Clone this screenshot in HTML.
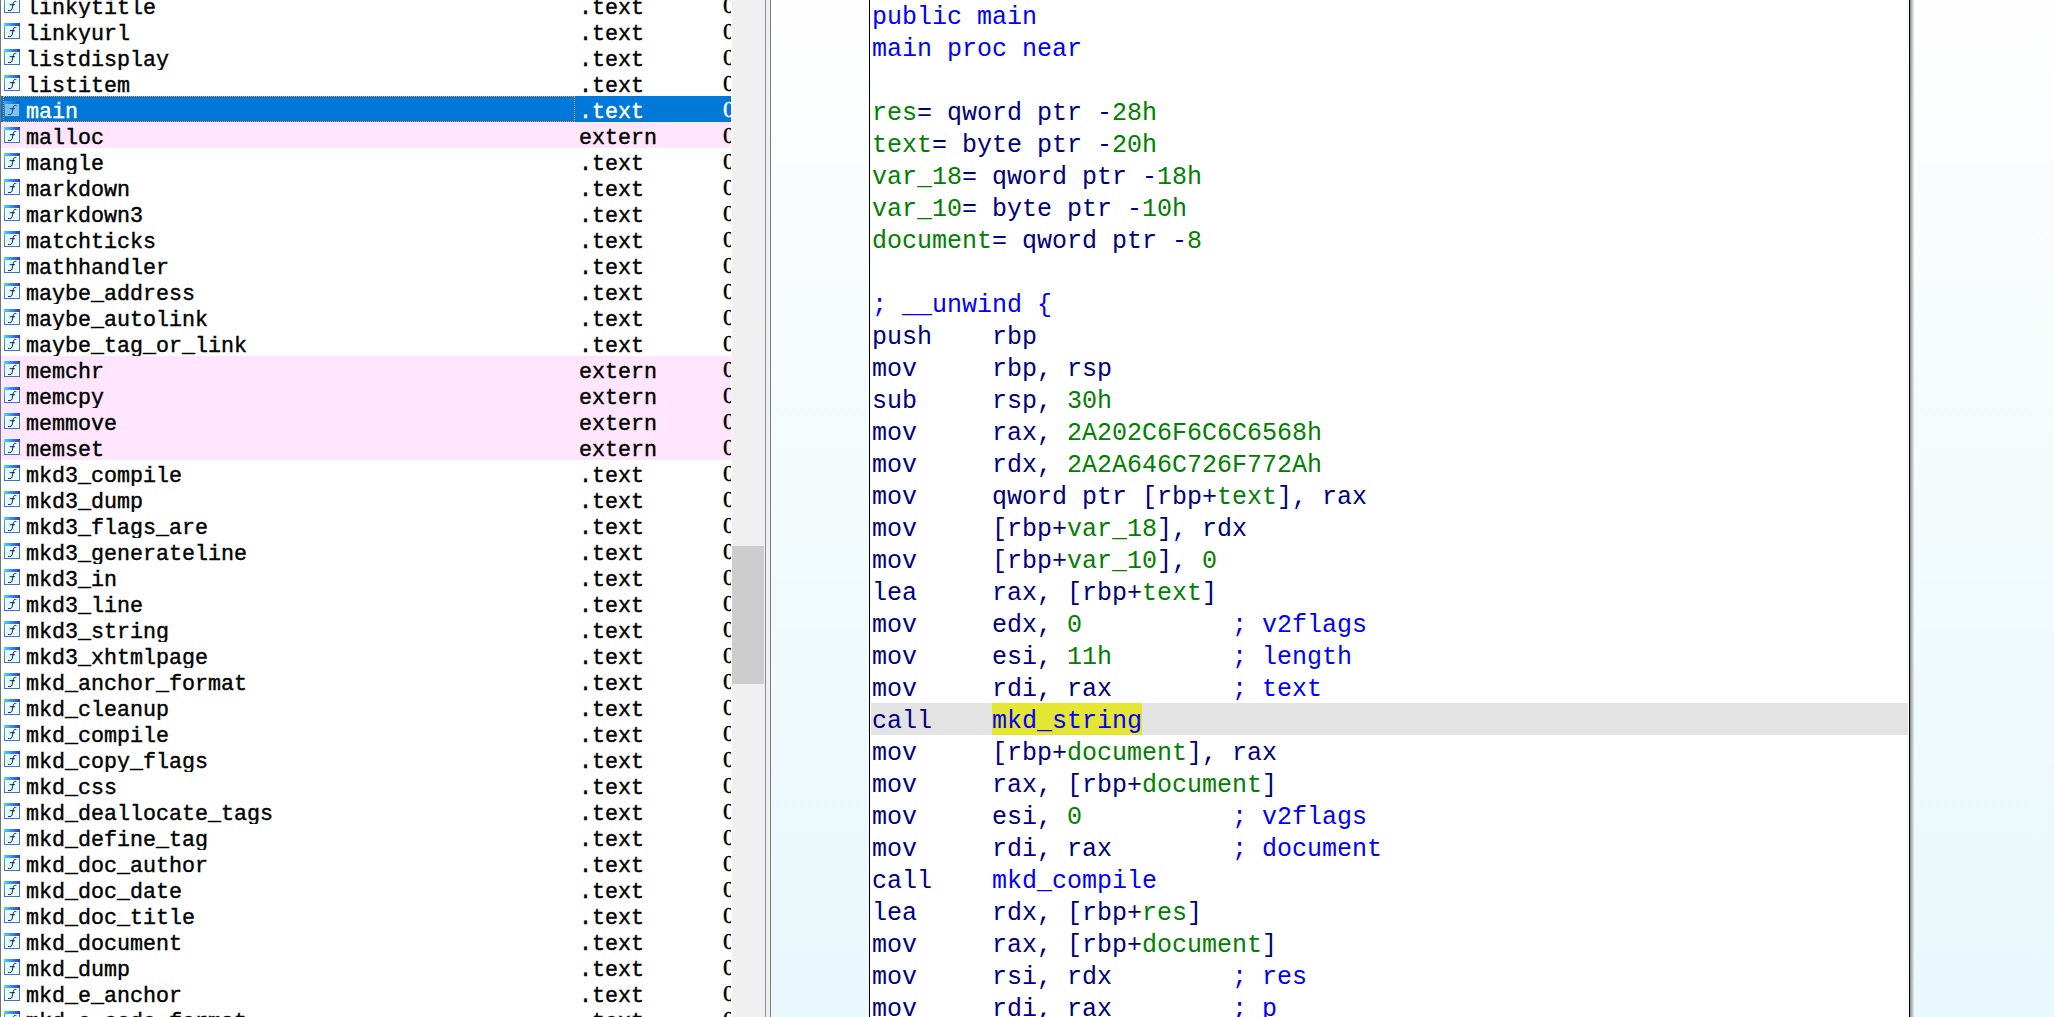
<!DOCTYPE html>
<html><head><meta charset="utf-8"><style>
*{margin:0;padding:0;box-sizing:border-box}
html,body{width:2054px;height:1017px;overflow:hidden;background:#fff}
body{position:relative;font-family:"Liberation Mono",monospace}
#left{position:absolute;left:0;top:0;width:732px;height:1017px;overflow:hidden;background:#fff}
#lb{position:absolute;left:0;top:0;width:1px;height:1017px;background:#6e7480;z-index:3}
.r{position:absolute;left:1px;width:730px;overflow:hidden;height:26px;color:#000;-webkit-text-stroke:0.4px currentColor;font-size:21.667px;line-height:26px;white-space:pre}
.r.ext{background:#ffe6fc}
.r.sel{background:#0078d7;color:#fff}
.r.sel .foc{position:absolute;left:2px;top:0;width:572px;height:26px;border:1px dotted #ff8c1a}
.ic{position:absolute;left:3px;top:5px}
.sel .tint{position:absolute;left:3px;top:5px;width:16px;height:16px;background:rgba(0,120,215,0.45)}
.c1{position:absolute;left:25px;top:4px}
.c2{position:absolute;left:578px;top:4px}
.c3{position:absolute;left:722px;top:0px;font-family:"Liberation Serif",serif;font-size:24px}
#sb{position:absolute;left:732px;top:0;width:33px;height:1017px;background:#f0f0f0}
#thumb{position:absolute;left:732px;top:546px;width:32px;height:138px;background:#cdcdcd}
#sp1{position:absolute;left:765px;top:0;width:1px;height:1017px;background:#878c96}
#sp{position:absolute;left:766px;top:0;width:4px;height:1017px;background:#f0f0f0}
#sp2{position:absolute;left:770px;top:0;width:1px;height:1017px;background:#7a7a7a}
#right{position:absolute;left:771px;top:0;width:1283px;height:1017px;overflow:hidden;background:linear-gradient(#fefefe 0px,#e8f8fc 1017px)}
#node{position:absolute;left:98px;top:-10px;width:1041px;height:1040px;background:#fff;border-left:1px solid #000;border-right:1px solid #000}
#shadow{position:absolute;left:1139px;top:-10px;width:4px;height:1040px;background:linear-gradient(90deg,#8a9096,rgba(200,210,215,0.3))}
.l{position:absolute;left:0;width:1039px;height:32px}
.l.cur{background:#e3e3e3;left:1px;width:1037px}
.l .t{position:absolute;left:2px;top:0;font-size:25px;line-height:32px;padding-top:3px;white-space:pre}
.l.cur .t{left:1px}
.n{color:#000080}.b{color:#0000ff}.g{color:#008000}
.hl{}
.yb{position:absolute;left:121px;top:0;width:150px;height:32px;background:#e5e534}
</style></head><body>
<svg width="0" height="0" style="position:absolute"><defs><linearGradient id="gb" x1="0" y1="0" x2="1" y2="0"><stop offset="0" stop-color="#48dcfc"/><stop offset="1" stop-color="#2838d0"/></linearGradient><linearGradient id="gl" x1="0" y1="0" x2="0" y2="1"><stop offset="0" stop-color="#38c4f4"/><stop offset="1" stop-color="#3a6cd8"/></linearGradient></defs></svg>
<div id="left"><div class="r" style="top:-8px"><svg class="ic" width="16" height="16" viewBox="0 0 16 16"><rect x="0.5" y="0.5" width="15" height="15" fill="#fff" stroke="#3b70dc"/><rect x="0" y="0" width="1" height="16" fill="url(#gl)"/><rect x="0" y="0" width="16" height="3" fill="url(#gb)"/><rect x="1" y="3" width="14" height="1" fill="#fff"/><rect x="2" y="4" width="12" height="10" fill="#e4fbfc"/><path d="M12.3 4.6 C11.0 4.0 9.8 4.5 9.3 6.4 L8.1 11.8 C7.7 13.4 6.7 13.8 4.0 13.5 M5.8 7.7 H10.9" fill="none" stroke="#0c1e4a" stroke-width="1.0"/></svg><span class="c1">linkytitle</span><span class="c2">.text</span><span class="c3">0</span></div><div class="r" style="top:18px"><svg class="ic" width="16" height="16" viewBox="0 0 16 16"><rect x="0.5" y="0.5" width="15" height="15" fill="#fff" stroke="#3b70dc"/><rect x="0" y="0" width="1" height="16" fill="url(#gl)"/><rect x="0" y="0" width="16" height="3" fill="url(#gb)"/><rect x="1" y="3" width="14" height="1" fill="#fff"/><rect x="2" y="4" width="12" height="10" fill="#e4fbfc"/><path d="M12.3 4.6 C11.0 4.0 9.8 4.5 9.3 6.4 L8.1 11.8 C7.7 13.4 6.7 13.8 4.0 13.5 M5.8 7.7 H10.9" fill="none" stroke="#0c1e4a" stroke-width="1.0"/></svg><span class="c1">linkyurl</span><span class="c2">.text</span><span class="c3">0</span></div><div class="r" style="top:44px"><svg class="ic" width="16" height="16" viewBox="0 0 16 16"><rect x="0.5" y="0.5" width="15" height="15" fill="#fff" stroke="#3b70dc"/><rect x="0" y="0" width="1" height="16" fill="url(#gl)"/><rect x="0" y="0" width="16" height="3" fill="url(#gb)"/><rect x="1" y="3" width="14" height="1" fill="#fff"/><rect x="2" y="4" width="12" height="10" fill="#e4fbfc"/><path d="M12.3 4.6 C11.0 4.0 9.8 4.5 9.3 6.4 L8.1 11.8 C7.7 13.4 6.7 13.8 4.0 13.5 M5.8 7.7 H10.9" fill="none" stroke="#0c1e4a" stroke-width="1.0"/></svg><span class="c1">listdisplay</span><span class="c2">.text</span><span class="c3">0</span></div><div class="r" style="top:70px"><svg class="ic" width="16" height="16" viewBox="0 0 16 16"><rect x="0.5" y="0.5" width="15" height="15" fill="#fff" stroke="#3b70dc"/><rect x="0" y="0" width="1" height="16" fill="url(#gl)"/><rect x="0" y="0" width="16" height="3" fill="url(#gb)"/><rect x="1" y="3" width="14" height="1" fill="#fff"/><rect x="2" y="4" width="12" height="10" fill="#e4fbfc"/><path d="M12.3 4.6 C11.0 4.0 9.8 4.5 9.3 6.4 L8.1 11.8 C7.7 13.4 6.7 13.8 4.0 13.5 M5.8 7.7 H10.9" fill="none" stroke="#0c1e4a" stroke-width="1.0"/></svg><span class="c1">listitem</span><span class="c2">.text</span><span class="c3">0</span></div><div class="r sel" style="top:96px"><div class="foc"></div><svg class="ic" width="16" height="16" viewBox="0 0 16 16"><rect x="0.5" y="0.5" width="15" height="15" fill="#fff" stroke="#3b70dc"/><rect x="0" y="0" width="1" height="16" fill="url(#gl)"/><rect x="0" y="0" width="16" height="3" fill="url(#gb)"/><rect x="1" y="3" width="14" height="1" fill="#fff"/><rect x="2" y="4" width="12" height="10" fill="#e4fbfc"/><path d="M12.3 4.6 C11.0 4.0 9.8 4.5 9.3 6.4 L8.1 11.8 C7.7 13.4 6.7 13.8 4.0 13.5 M5.8 7.7 H10.9" fill="none" stroke="#0c1e4a" stroke-width="1.0"/></svg><div class="tint"></div><span class="c1">main</span><span class="c2">.text</span><span class="c3">0</span></div><div class="r ext" style="top:122px"><svg class="ic" width="16" height="16" viewBox="0 0 16 16"><rect x="0.5" y="0.5" width="15" height="15" fill="#fff" stroke="#3b70dc"/><rect x="0" y="0" width="1" height="16" fill="url(#gl)"/><rect x="0" y="0" width="16" height="3" fill="url(#gb)"/><rect x="1" y="3" width="14" height="1" fill="#fff"/><rect x="2" y="4" width="12" height="10" fill="#e4fbfc"/><path d="M12.3 4.6 C11.0 4.0 9.8 4.5 9.3 6.4 L8.1 11.8 C7.7 13.4 6.7 13.8 4.0 13.5 M5.8 7.7 H10.9" fill="none" stroke="#0c1e4a" stroke-width="1.0"/></svg><span class="c1">malloc</span><span class="c2">extern</span><span class="c3">0</span></div><div class="r" style="top:148px"><svg class="ic" width="16" height="16" viewBox="0 0 16 16"><rect x="0.5" y="0.5" width="15" height="15" fill="#fff" stroke="#3b70dc"/><rect x="0" y="0" width="1" height="16" fill="url(#gl)"/><rect x="0" y="0" width="16" height="3" fill="url(#gb)"/><rect x="1" y="3" width="14" height="1" fill="#fff"/><rect x="2" y="4" width="12" height="10" fill="#e4fbfc"/><path d="M12.3 4.6 C11.0 4.0 9.8 4.5 9.3 6.4 L8.1 11.8 C7.7 13.4 6.7 13.8 4.0 13.5 M5.8 7.7 H10.9" fill="none" stroke="#0c1e4a" stroke-width="1.0"/></svg><span class="c1">mangle</span><span class="c2">.text</span><span class="c3">0</span></div><div class="r" style="top:174px"><svg class="ic" width="16" height="16" viewBox="0 0 16 16"><rect x="0.5" y="0.5" width="15" height="15" fill="#fff" stroke="#3b70dc"/><rect x="0" y="0" width="1" height="16" fill="url(#gl)"/><rect x="0" y="0" width="16" height="3" fill="url(#gb)"/><rect x="1" y="3" width="14" height="1" fill="#fff"/><rect x="2" y="4" width="12" height="10" fill="#e4fbfc"/><path d="M12.3 4.6 C11.0 4.0 9.8 4.5 9.3 6.4 L8.1 11.8 C7.7 13.4 6.7 13.8 4.0 13.5 M5.8 7.7 H10.9" fill="none" stroke="#0c1e4a" stroke-width="1.0"/></svg><span class="c1">markdown</span><span class="c2">.text</span><span class="c3">0</span></div><div class="r" style="top:200px"><svg class="ic" width="16" height="16" viewBox="0 0 16 16"><rect x="0.5" y="0.5" width="15" height="15" fill="#fff" stroke="#3b70dc"/><rect x="0" y="0" width="1" height="16" fill="url(#gl)"/><rect x="0" y="0" width="16" height="3" fill="url(#gb)"/><rect x="1" y="3" width="14" height="1" fill="#fff"/><rect x="2" y="4" width="12" height="10" fill="#e4fbfc"/><path d="M12.3 4.6 C11.0 4.0 9.8 4.5 9.3 6.4 L8.1 11.8 C7.7 13.4 6.7 13.8 4.0 13.5 M5.8 7.7 H10.9" fill="none" stroke="#0c1e4a" stroke-width="1.0"/></svg><span class="c1">markdown3</span><span class="c2">.text</span><span class="c3">0</span></div><div class="r" style="top:226px"><svg class="ic" width="16" height="16" viewBox="0 0 16 16"><rect x="0.5" y="0.5" width="15" height="15" fill="#fff" stroke="#3b70dc"/><rect x="0" y="0" width="1" height="16" fill="url(#gl)"/><rect x="0" y="0" width="16" height="3" fill="url(#gb)"/><rect x="1" y="3" width="14" height="1" fill="#fff"/><rect x="2" y="4" width="12" height="10" fill="#e4fbfc"/><path d="M12.3 4.6 C11.0 4.0 9.8 4.5 9.3 6.4 L8.1 11.8 C7.7 13.4 6.7 13.8 4.0 13.5 M5.8 7.7 H10.9" fill="none" stroke="#0c1e4a" stroke-width="1.0"/></svg><span class="c1">matchticks</span><span class="c2">.text</span><span class="c3">0</span></div><div class="r" style="top:252px"><svg class="ic" width="16" height="16" viewBox="0 0 16 16"><rect x="0.5" y="0.5" width="15" height="15" fill="#fff" stroke="#3b70dc"/><rect x="0" y="0" width="1" height="16" fill="url(#gl)"/><rect x="0" y="0" width="16" height="3" fill="url(#gb)"/><rect x="1" y="3" width="14" height="1" fill="#fff"/><rect x="2" y="4" width="12" height="10" fill="#e4fbfc"/><path d="M12.3 4.6 C11.0 4.0 9.8 4.5 9.3 6.4 L8.1 11.8 C7.7 13.4 6.7 13.8 4.0 13.5 M5.8 7.7 H10.9" fill="none" stroke="#0c1e4a" stroke-width="1.0"/></svg><span class="c1">mathhandler</span><span class="c2">.text</span><span class="c3">0</span></div><div class="r" style="top:278px"><svg class="ic" width="16" height="16" viewBox="0 0 16 16"><rect x="0.5" y="0.5" width="15" height="15" fill="#fff" stroke="#3b70dc"/><rect x="0" y="0" width="1" height="16" fill="url(#gl)"/><rect x="0" y="0" width="16" height="3" fill="url(#gb)"/><rect x="1" y="3" width="14" height="1" fill="#fff"/><rect x="2" y="4" width="12" height="10" fill="#e4fbfc"/><path d="M12.3 4.6 C11.0 4.0 9.8 4.5 9.3 6.4 L8.1 11.8 C7.7 13.4 6.7 13.8 4.0 13.5 M5.8 7.7 H10.9" fill="none" stroke="#0c1e4a" stroke-width="1.0"/></svg><span class="c1">maybe_address</span><span class="c2">.text</span><span class="c3">0</span></div><div class="r" style="top:304px"><svg class="ic" width="16" height="16" viewBox="0 0 16 16"><rect x="0.5" y="0.5" width="15" height="15" fill="#fff" stroke="#3b70dc"/><rect x="0" y="0" width="1" height="16" fill="url(#gl)"/><rect x="0" y="0" width="16" height="3" fill="url(#gb)"/><rect x="1" y="3" width="14" height="1" fill="#fff"/><rect x="2" y="4" width="12" height="10" fill="#e4fbfc"/><path d="M12.3 4.6 C11.0 4.0 9.8 4.5 9.3 6.4 L8.1 11.8 C7.7 13.4 6.7 13.8 4.0 13.5 M5.8 7.7 H10.9" fill="none" stroke="#0c1e4a" stroke-width="1.0"/></svg><span class="c1">maybe_autolink</span><span class="c2">.text</span><span class="c3">0</span></div><div class="r" style="top:330px"><svg class="ic" width="16" height="16" viewBox="0 0 16 16"><rect x="0.5" y="0.5" width="15" height="15" fill="#fff" stroke="#3b70dc"/><rect x="0" y="0" width="1" height="16" fill="url(#gl)"/><rect x="0" y="0" width="16" height="3" fill="url(#gb)"/><rect x="1" y="3" width="14" height="1" fill="#fff"/><rect x="2" y="4" width="12" height="10" fill="#e4fbfc"/><path d="M12.3 4.6 C11.0 4.0 9.8 4.5 9.3 6.4 L8.1 11.8 C7.7 13.4 6.7 13.8 4.0 13.5 M5.8 7.7 H10.9" fill="none" stroke="#0c1e4a" stroke-width="1.0"/></svg><span class="c1">maybe_tag_or_link</span><span class="c2">.text</span><span class="c3">0</span></div><div class="r ext" style="top:356px"><svg class="ic" width="16" height="16" viewBox="0 0 16 16"><rect x="0.5" y="0.5" width="15" height="15" fill="#fff" stroke="#3b70dc"/><rect x="0" y="0" width="1" height="16" fill="url(#gl)"/><rect x="0" y="0" width="16" height="3" fill="url(#gb)"/><rect x="1" y="3" width="14" height="1" fill="#fff"/><rect x="2" y="4" width="12" height="10" fill="#e4fbfc"/><path d="M12.3 4.6 C11.0 4.0 9.8 4.5 9.3 6.4 L8.1 11.8 C7.7 13.4 6.7 13.8 4.0 13.5 M5.8 7.7 H10.9" fill="none" stroke="#0c1e4a" stroke-width="1.0"/></svg><span class="c1">memchr</span><span class="c2">extern</span><span class="c3">0</span></div><div class="r ext" style="top:382px"><svg class="ic" width="16" height="16" viewBox="0 0 16 16"><rect x="0.5" y="0.5" width="15" height="15" fill="#fff" stroke="#3b70dc"/><rect x="0" y="0" width="1" height="16" fill="url(#gl)"/><rect x="0" y="0" width="16" height="3" fill="url(#gb)"/><rect x="1" y="3" width="14" height="1" fill="#fff"/><rect x="2" y="4" width="12" height="10" fill="#e4fbfc"/><path d="M12.3 4.6 C11.0 4.0 9.8 4.5 9.3 6.4 L8.1 11.8 C7.7 13.4 6.7 13.8 4.0 13.5 M5.8 7.7 H10.9" fill="none" stroke="#0c1e4a" stroke-width="1.0"/></svg><span class="c1">memcpy</span><span class="c2">extern</span><span class="c3">0</span></div><div class="r ext" style="top:408px"><svg class="ic" width="16" height="16" viewBox="0 0 16 16"><rect x="0.5" y="0.5" width="15" height="15" fill="#fff" stroke="#3b70dc"/><rect x="0" y="0" width="1" height="16" fill="url(#gl)"/><rect x="0" y="0" width="16" height="3" fill="url(#gb)"/><rect x="1" y="3" width="14" height="1" fill="#fff"/><rect x="2" y="4" width="12" height="10" fill="#e4fbfc"/><path d="M12.3 4.6 C11.0 4.0 9.8 4.5 9.3 6.4 L8.1 11.8 C7.7 13.4 6.7 13.8 4.0 13.5 M5.8 7.7 H10.9" fill="none" stroke="#0c1e4a" stroke-width="1.0"/></svg><span class="c1">memmove</span><span class="c2">extern</span><span class="c3">0</span></div><div class="r ext" style="top:434px"><svg class="ic" width="16" height="16" viewBox="0 0 16 16"><rect x="0.5" y="0.5" width="15" height="15" fill="#fff" stroke="#3b70dc"/><rect x="0" y="0" width="1" height="16" fill="url(#gl)"/><rect x="0" y="0" width="16" height="3" fill="url(#gb)"/><rect x="1" y="3" width="14" height="1" fill="#fff"/><rect x="2" y="4" width="12" height="10" fill="#e4fbfc"/><path d="M12.3 4.6 C11.0 4.0 9.8 4.5 9.3 6.4 L8.1 11.8 C7.7 13.4 6.7 13.8 4.0 13.5 M5.8 7.7 H10.9" fill="none" stroke="#0c1e4a" stroke-width="1.0"/></svg><span class="c1">memset</span><span class="c2">extern</span><span class="c3">0</span></div><div class="r" style="top:460px"><svg class="ic" width="16" height="16" viewBox="0 0 16 16"><rect x="0.5" y="0.5" width="15" height="15" fill="#fff" stroke="#3b70dc"/><rect x="0" y="0" width="1" height="16" fill="url(#gl)"/><rect x="0" y="0" width="16" height="3" fill="url(#gb)"/><rect x="1" y="3" width="14" height="1" fill="#fff"/><rect x="2" y="4" width="12" height="10" fill="#e4fbfc"/><path d="M12.3 4.6 C11.0 4.0 9.8 4.5 9.3 6.4 L8.1 11.8 C7.7 13.4 6.7 13.8 4.0 13.5 M5.8 7.7 H10.9" fill="none" stroke="#0c1e4a" stroke-width="1.0"/></svg><span class="c1">mkd3_compile</span><span class="c2">.text</span><span class="c3">0</span></div><div class="r" style="top:486px"><svg class="ic" width="16" height="16" viewBox="0 0 16 16"><rect x="0.5" y="0.5" width="15" height="15" fill="#fff" stroke="#3b70dc"/><rect x="0" y="0" width="1" height="16" fill="url(#gl)"/><rect x="0" y="0" width="16" height="3" fill="url(#gb)"/><rect x="1" y="3" width="14" height="1" fill="#fff"/><rect x="2" y="4" width="12" height="10" fill="#e4fbfc"/><path d="M12.3 4.6 C11.0 4.0 9.8 4.5 9.3 6.4 L8.1 11.8 C7.7 13.4 6.7 13.8 4.0 13.5 M5.8 7.7 H10.9" fill="none" stroke="#0c1e4a" stroke-width="1.0"/></svg><span class="c1">mkd3_dump</span><span class="c2">.text</span><span class="c3">0</span></div><div class="r" style="top:512px"><svg class="ic" width="16" height="16" viewBox="0 0 16 16"><rect x="0.5" y="0.5" width="15" height="15" fill="#fff" stroke="#3b70dc"/><rect x="0" y="0" width="1" height="16" fill="url(#gl)"/><rect x="0" y="0" width="16" height="3" fill="url(#gb)"/><rect x="1" y="3" width="14" height="1" fill="#fff"/><rect x="2" y="4" width="12" height="10" fill="#e4fbfc"/><path d="M12.3 4.6 C11.0 4.0 9.8 4.5 9.3 6.4 L8.1 11.8 C7.7 13.4 6.7 13.8 4.0 13.5 M5.8 7.7 H10.9" fill="none" stroke="#0c1e4a" stroke-width="1.0"/></svg><span class="c1">mkd3_flags_are</span><span class="c2">.text</span><span class="c3">0</span></div><div class="r" style="top:538px"><svg class="ic" width="16" height="16" viewBox="0 0 16 16"><rect x="0.5" y="0.5" width="15" height="15" fill="#fff" stroke="#3b70dc"/><rect x="0" y="0" width="1" height="16" fill="url(#gl)"/><rect x="0" y="0" width="16" height="3" fill="url(#gb)"/><rect x="1" y="3" width="14" height="1" fill="#fff"/><rect x="2" y="4" width="12" height="10" fill="#e4fbfc"/><path d="M12.3 4.6 C11.0 4.0 9.8 4.5 9.3 6.4 L8.1 11.8 C7.7 13.4 6.7 13.8 4.0 13.5 M5.8 7.7 H10.9" fill="none" stroke="#0c1e4a" stroke-width="1.0"/></svg><span class="c1">mkd3_generateline</span><span class="c2">.text</span><span class="c3">0</span></div><div class="r" style="top:564px"><svg class="ic" width="16" height="16" viewBox="0 0 16 16"><rect x="0.5" y="0.5" width="15" height="15" fill="#fff" stroke="#3b70dc"/><rect x="0" y="0" width="1" height="16" fill="url(#gl)"/><rect x="0" y="0" width="16" height="3" fill="url(#gb)"/><rect x="1" y="3" width="14" height="1" fill="#fff"/><rect x="2" y="4" width="12" height="10" fill="#e4fbfc"/><path d="M12.3 4.6 C11.0 4.0 9.8 4.5 9.3 6.4 L8.1 11.8 C7.7 13.4 6.7 13.8 4.0 13.5 M5.8 7.7 H10.9" fill="none" stroke="#0c1e4a" stroke-width="1.0"/></svg><span class="c1">mkd3_in</span><span class="c2">.text</span><span class="c3">0</span></div><div class="r" style="top:590px"><svg class="ic" width="16" height="16" viewBox="0 0 16 16"><rect x="0.5" y="0.5" width="15" height="15" fill="#fff" stroke="#3b70dc"/><rect x="0" y="0" width="1" height="16" fill="url(#gl)"/><rect x="0" y="0" width="16" height="3" fill="url(#gb)"/><rect x="1" y="3" width="14" height="1" fill="#fff"/><rect x="2" y="4" width="12" height="10" fill="#e4fbfc"/><path d="M12.3 4.6 C11.0 4.0 9.8 4.5 9.3 6.4 L8.1 11.8 C7.7 13.4 6.7 13.8 4.0 13.5 M5.8 7.7 H10.9" fill="none" stroke="#0c1e4a" stroke-width="1.0"/></svg><span class="c1">mkd3_line</span><span class="c2">.text</span><span class="c3">0</span></div><div class="r" style="top:616px"><svg class="ic" width="16" height="16" viewBox="0 0 16 16"><rect x="0.5" y="0.5" width="15" height="15" fill="#fff" stroke="#3b70dc"/><rect x="0" y="0" width="1" height="16" fill="url(#gl)"/><rect x="0" y="0" width="16" height="3" fill="url(#gb)"/><rect x="1" y="3" width="14" height="1" fill="#fff"/><rect x="2" y="4" width="12" height="10" fill="#e4fbfc"/><path d="M12.3 4.6 C11.0 4.0 9.8 4.5 9.3 6.4 L8.1 11.8 C7.7 13.4 6.7 13.8 4.0 13.5 M5.8 7.7 H10.9" fill="none" stroke="#0c1e4a" stroke-width="1.0"/></svg><span class="c1">mkd3_string</span><span class="c2">.text</span><span class="c3">0</span></div><div class="r" style="top:642px"><svg class="ic" width="16" height="16" viewBox="0 0 16 16"><rect x="0.5" y="0.5" width="15" height="15" fill="#fff" stroke="#3b70dc"/><rect x="0" y="0" width="1" height="16" fill="url(#gl)"/><rect x="0" y="0" width="16" height="3" fill="url(#gb)"/><rect x="1" y="3" width="14" height="1" fill="#fff"/><rect x="2" y="4" width="12" height="10" fill="#e4fbfc"/><path d="M12.3 4.6 C11.0 4.0 9.8 4.5 9.3 6.4 L8.1 11.8 C7.7 13.4 6.7 13.8 4.0 13.5 M5.8 7.7 H10.9" fill="none" stroke="#0c1e4a" stroke-width="1.0"/></svg><span class="c1">mkd3_xhtmlpage</span><span class="c2">.text</span><span class="c3">0</span></div><div class="r" style="top:668px"><svg class="ic" width="16" height="16" viewBox="0 0 16 16"><rect x="0.5" y="0.5" width="15" height="15" fill="#fff" stroke="#3b70dc"/><rect x="0" y="0" width="1" height="16" fill="url(#gl)"/><rect x="0" y="0" width="16" height="3" fill="url(#gb)"/><rect x="1" y="3" width="14" height="1" fill="#fff"/><rect x="2" y="4" width="12" height="10" fill="#e4fbfc"/><path d="M12.3 4.6 C11.0 4.0 9.8 4.5 9.3 6.4 L8.1 11.8 C7.7 13.4 6.7 13.8 4.0 13.5 M5.8 7.7 H10.9" fill="none" stroke="#0c1e4a" stroke-width="1.0"/></svg><span class="c1">mkd_anchor_format</span><span class="c2">.text</span><span class="c3">0</span></div><div class="r" style="top:694px"><svg class="ic" width="16" height="16" viewBox="0 0 16 16"><rect x="0.5" y="0.5" width="15" height="15" fill="#fff" stroke="#3b70dc"/><rect x="0" y="0" width="1" height="16" fill="url(#gl)"/><rect x="0" y="0" width="16" height="3" fill="url(#gb)"/><rect x="1" y="3" width="14" height="1" fill="#fff"/><rect x="2" y="4" width="12" height="10" fill="#e4fbfc"/><path d="M12.3 4.6 C11.0 4.0 9.8 4.5 9.3 6.4 L8.1 11.8 C7.7 13.4 6.7 13.8 4.0 13.5 M5.8 7.7 H10.9" fill="none" stroke="#0c1e4a" stroke-width="1.0"/></svg><span class="c1">mkd_cleanup</span><span class="c2">.text</span><span class="c3">0</span></div><div class="r" style="top:720px"><svg class="ic" width="16" height="16" viewBox="0 0 16 16"><rect x="0.5" y="0.5" width="15" height="15" fill="#fff" stroke="#3b70dc"/><rect x="0" y="0" width="1" height="16" fill="url(#gl)"/><rect x="0" y="0" width="16" height="3" fill="url(#gb)"/><rect x="1" y="3" width="14" height="1" fill="#fff"/><rect x="2" y="4" width="12" height="10" fill="#e4fbfc"/><path d="M12.3 4.6 C11.0 4.0 9.8 4.5 9.3 6.4 L8.1 11.8 C7.7 13.4 6.7 13.8 4.0 13.5 M5.8 7.7 H10.9" fill="none" stroke="#0c1e4a" stroke-width="1.0"/></svg><span class="c1">mkd_compile</span><span class="c2">.text</span><span class="c3">0</span></div><div class="r" style="top:746px"><svg class="ic" width="16" height="16" viewBox="0 0 16 16"><rect x="0.5" y="0.5" width="15" height="15" fill="#fff" stroke="#3b70dc"/><rect x="0" y="0" width="1" height="16" fill="url(#gl)"/><rect x="0" y="0" width="16" height="3" fill="url(#gb)"/><rect x="1" y="3" width="14" height="1" fill="#fff"/><rect x="2" y="4" width="12" height="10" fill="#e4fbfc"/><path d="M12.3 4.6 C11.0 4.0 9.8 4.5 9.3 6.4 L8.1 11.8 C7.7 13.4 6.7 13.8 4.0 13.5 M5.8 7.7 H10.9" fill="none" stroke="#0c1e4a" stroke-width="1.0"/></svg><span class="c1">mkd_copy_flags</span><span class="c2">.text</span><span class="c3">0</span></div><div class="r" style="top:772px"><svg class="ic" width="16" height="16" viewBox="0 0 16 16"><rect x="0.5" y="0.5" width="15" height="15" fill="#fff" stroke="#3b70dc"/><rect x="0" y="0" width="1" height="16" fill="url(#gl)"/><rect x="0" y="0" width="16" height="3" fill="url(#gb)"/><rect x="1" y="3" width="14" height="1" fill="#fff"/><rect x="2" y="4" width="12" height="10" fill="#e4fbfc"/><path d="M12.3 4.6 C11.0 4.0 9.8 4.5 9.3 6.4 L8.1 11.8 C7.7 13.4 6.7 13.8 4.0 13.5 M5.8 7.7 H10.9" fill="none" stroke="#0c1e4a" stroke-width="1.0"/></svg><span class="c1">mkd_css</span><span class="c2">.text</span><span class="c3">0</span></div><div class="r" style="top:798px"><svg class="ic" width="16" height="16" viewBox="0 0 16 16"><rect x="0.5" y="0.5" width="15" height="15" fill="#fff" stroke="#3b70dc"/><rect x="0" y="0" width="1" height="16" fill="url(#gl)"/><rect x="0" y="0" width="16" height="3" fill="url(#gb)"/><rect x="1" y="3" width="14" height="1" fill="#fff"/><rect x="2" y="4" width="12" height="10" fill="#e4fbfc"/><path d="M12.3 4.6 C11.0 4.0 9.8 4.5 9.3 6.4 L8.1 11.8 C7.7 13.4 6.7 13.8 4.0 13.5 M5.8 7.7 H10.9" fill="none" stroke="#0c1e4a" stroke-width="1.0"/></svg><span class="c1">mkd_deallocate_tags</span><span class="c2">.text</span><span class="c3">0</span></div><div class="r" style="top:824px"><svg class="ic" width="16" height="16" viewBox="0 0 16 16"><rect x="0.5" y="0.5" width="15" height="15" fill="#fff" stroke="#3b70dc"/><rect x="0" y="0" width="1" height="16" fill="url(#gl)"/><rect x="0" y="0" width="16" height="3" fill="url(#gb)"/><rect x="1" y="3" width="14" height="1" fill="#fff"/><rect x="2" y="4" width="12" height="10" fill="#e4fbfc"/><path d="M12.3 4.6 C11.0 4.0 9.8 4.5 9.3 6.4 L8.1 11.8 C7.7 13.4 6.7 13.8 4.0 13.5 M5.8 7.7 H10.9" fill="none" stroke="#0c1e4a" stroke-width="1.0"/></svg><span class="c1">mkd_define_tag</span><span class="c2">.text</span><span class="c3">0</span></div><div class="r" style="top:850px"><svg class="ic" width="16" height="16" viewBox="0 0 16 16"><rect x="0.5" y="0.5" width="15" height="15" fill="#fff" stroke="#3b70dc"/><rect x="0" y="0" width="1" height="16" fill="url(#gl)"/><rect x="0" y="0" width="16" height="3" fill="url(#gb)"/><rect x="1" y="3" width="14" height="1" fill="#fff"/><rect x="2" y="4" width="12" height="10" fill="#e4fbfc"/><path d="M12.3 4.6 C11.0 4.0 9.8 4.5 9.3 6.4 L8.1 11.8 C7.7 13.4 6.7 13.8 4.0 13.5 M5.8 7.7 H10.9" fill="none" stroke="#0c1e4a" stroke-width="1.0"/></svg><span class="c1">mkd_doc_author</span><span class="c2">.text</span><span class="c3">0</span></div><div class="r" style="top:876px"><svg class="ic" width="16" height="16" viewBox="0 0 16 16"><rect x="0.5" y="0.5" width="15" height="15" fill="#fff" stroke="#3b70dc"/><rect x="0" y="0" width="1" height="16" fill="url(#gl)"/><rect x="0" y="0" width="16" height="3" fill="url(#gb)"/><rect x="1" y="3" width="14" height="1" fill="#fff"/><rect x="2" y="4" width="12" height="10" fill="#e4fbfc"/><path d="M12.3 4.6 C11.0 4.0 9.8 4.5 9.3 6.4 L8.1 11.8 C7.7 13.4 6.7 13.8 4.0 13.5 M5.8 7.7 H10.9" fill="none" stroke="#0c1e4a" stroke-width="1.0"/></svg><span class="c1">mkd_doc_date</span><span class="c2">.text</span><span class="c3">0</span></div><div class="r" style="top:902px"><svg class="ic" width="16" height="16" viewBox="0 0 16 16"><rect x="0.5" y="0.5" width="15" height="15" fill="#fff" stroke="#3b70dc"/><rect x="0" y="0" width="1" height="16" fill="url(#gl)"/><rect x="0" y="0" width="16" height="3" fill="url(#gb)"/><rect x="1" y="3" width="14" height="1" fill="#fff"/><rect x="2" y="4" width="12" height="10" fill="#e4fbfc"/><path d="M12.3 4.6 C11.0 4.0 9.8 4.5 9.3 6.4 L8.1 11.8 C7.7 13.4 6.7 13.8 4.0 13.5 M5.8 7.7 H10.9" fill="none" stroke="#0c1e4a" stroke-width="1.0"/></svg><span class="c1">mkd_doc_title</span><span class="c2">.text</span><span class="c3">0</span></div><div class="r" style="top:928px"><svg class="ic" width="16" height="16" viewBox="0 0 16 16"><rect x="0.5" y="0.5" width="15" height="15" fill="#fff" stroke="#3b70dc"/><rect x="0" y="0" width="1" height="16" fill="url(#gl)"/><rect x="0" y="0" width="16" height="3" fill="url(#gb)"/><rect x="1" y="3" width="14" height="1" fill="#fff"/><rect x="2" y="4" width="12" height="10" fill="#e4fbfc"/><path d="M12.3 4.6 C11.0 4.0 9.8 4.5 9.3 6.4 L8.1 11.8 C7.7 13.4 6.7 13.8 4.0 13.5 M5.8 7.7 H10.9" fill="none" stroke="#0c1e4a" stroke-width="1.0"/></svg><span class="c1">mkd_document</span><span class="c2">.text</span><span class="c3">0</span></div><div class="r" style="top:954px"><svg class="ic" width="16" height="16" viewBox="0 0 16 16"><rect x="0.5" y="0.5" width="15" height="15" fill="#fff" stroke="#3b70dc"/><rect x="0" y="0" width="1" height="16" fill="url(#gl)"/><rect x="0" y="0" width="16" height="3" fill="url(#gb)"/><rect x="1" y="3" width="14" height="1" fill="#fff"/><rect x="2" y="4" width="12" height="10" fill="#e4fbfc"/><path d="M12.3 4.6 C11.0 4.0 9.8 4.5 9.3 6.4 L8.1 11.8 C7.7 13.4 6.7 13.8 4.0 13.5 M5.8 7.7 H10.9" fill="none" stroke="#0c1e4a" stroke-width="1.0"/></svg><span class="c1">mkd_dump</span><span class="c2">.text</span><span class="c3">0</span></div><div class="r" style="top:980px"><svg class="ic" width="16" height="16" viewBox="0 0 16 16"><rect x="0.5" y="0.5" width="15" height="15" fill="#fff" stroke="#3b70dc"/><rect x="0" y="0" width="1" height="16" fill="url(#gl)"/><rect x="0" y="0" width="16" height="3" fill="url(#gb)"/><rect x="1" y="3" width="14" height="1" fill="#fff"/><rect x="2" y="4" width="12" height="10" fill="#e4fbfc"/><path d="M12.3 4.6 C11.0 4.0 9.8 4.5 9.3 6.4 L8.1 11.8 C7.7 13.4 6.7 13.8 4.0 13.5 M5.8 7.7 H10.9" fill="none" stroke="#0c1e4a" stroke-width="1.0"/></svg><span class="c1">mkd_e_anchor</span><span class="c2">.text</span><span class="c3">0</span></div><div class="r" style="top:1006px"><svg class="ic" width="16" height="16" viewBox="0 0 16 16"><rect x="0.5" y="0.5" width="15" height="15" fill="#fff" stroke="#3b70dc"/><rect x="0" y="0" width="1" height="16" fill="url(#gl)"/><rect x="0" y="0" width="16" height="3" fill="url(#gb)"/><rect x="1" y="3" width="14" height="1" fill="#fff"/><rect x="2" y="4" width="12" height="10" fill="#e4fbfc"/><path d="M12.3 4.6 C11.0 4.0 9.8 4.5 9.3 6.4 L8.1 11.8 C7.7 13.4 6.7 13.8 4.0 13.5 M5.8 7.7 H10.9" fill="none" stroke="#0c1e4a" stroke-width="1.0"/></svg><span class="c1">mkd_e_code_format</span><span class="c2">.text</span><span class="c3">0</span></div></div>
<div id="lb"></div>
<div id="sb"></div><div id="thumb"></div>
<div id="sp1"></div><div id="sp"></div><div id="sp2"></div>
<div id="right"><div id="node"><div class="l" style="top:9px"><div class="t"><span class="b">public main</span></div></div><div class="l" style="top:41px"><div class="t"><span class="b">main proc near</span></div></div><div class="l" style="top:73px"><div class="t"></div></div><div class="l" style="top:105px"><div class="t"><span class="g">res</span><span class="n">= qword ptr -</span><span class="g">28h</span></div></div><div class="l" style="top:137px"><div class="t"><span class="g">text</span><span class="n">= byte ptr -</span><span class="g">20h</span></div></div><div class="l" style="top:169px"><div class="t"><span class="g">var_18</span><span class="n">= qword ptr -</span><span class="g">18h</span></div></div><div class="l" style="top:201px"><div class="t"><span class="g">var_10</span><span class="n">= byte ptr -</span><span class="g">10h</span></div></div><div class="l" style="top:233px"><div class="t"><span class="g">document</span><span class="n">= qword ptr -</span><span class="g">8</span></div></div><div class="l" style="top:265px"><div class="t"></div></div><div class="l" style="top:297px"><div class="t"><span class="b">; __unwind {</span></div></div><div class="l" style="top:329px"><div class="t"><span class="n">push    </span><span class="n">rbp</span></div></div><div class="l" style="top:361px"><div class="t"><span class="n">mov     </span><span class="n">rbp, rsp</span></div></div><div class="l" style="top:393px"><div class="t"><span class="n">sub     </span><span class="n">rsp, </span><span class="g">30h</span></div></div><div class="l" style="top:425px"><div class="t"><span class="n">mov     </span><span class="n">rax, </span><span class="g">2A202C6F6C6C6568h</span></div></div><div class="l" style="top:457px"><div class="t"><span class="n">mov     </span><span class="n">rdx, </span><span class="g">2A2A646C726F772Ah</span></div></div><div class="l" style="top:489px"><div class="t"><span class="n">mov     </span><span class="n">qword ptr [rbp+</span><span class="g">text</span><span class="n">], rax</span></div></div><div class="l" style="top:521px"><div class="t"><span class="n">mov     </span><span class="n">[rbp+</span><span class="g">var_18</span><span class="n">], rdx</span></div></div><div class="l" style="top:553px"><div class="t"><span class="n">mov     </span><span class="n">[rbp+</span><span class="g">var_10</span><span class="n">], </span><span class="g">0</span></div></div><div class="l" style="top:585px"><div class="t"><span class="n">lea     </span><span class="n">rax, [rbp+</span><span class="g">text</span><span class="n">]</span></div></div><div class="l" style="top:617px"><div class="t"><span class="n">mov     </span><span class="n">edx, </span><span class="g">0</span><span class="n">          </span><span class="b">; v2flags</span></div></div><div class="l" style="top:649px"><div class="t"><span class="n">mov     </span><span class="n">esi, </span><span class="g">11h</span><span class="n">        </span><span class="b">; length</span></div></div><div class="l" style="top:681px"><div class="t"><span class="n">mov     </span><span class="n">rdi, rax</span><span class="n">        </span><span class="b">; text</span></div></div><div class="l cur" style="top:713px"><div class="yb"></div><div class="t"><span class="n">call    </span><span class="b hl">mkd_string</span></div></div><div class="l" style="top:745px"><div class="t"><span class="n">mov     </span><span class="n">[rbp+</span><span class="g">document</span><span class="n">], rax</span></div></div><div class="l" style="top:777px"><div class="t"><span class="n">mov     </span><span class="n">rax, [rbp+</span><span class="g">document</span><span class="n">]</span></div></div><div class="l" style="top:809px"><div class="t"><span class="n">mov     </span><span class="n">esi, </span><span class="g">0</span><span class="n">          </span><span class="b">; v2flags</span></div></div><div class="l" style="top:841px"><div class="t"><span class="n">mov     </span><span class="n">rdi, rax</span><span class="n">        </span><span class="b">; document</span></div></div><div class="l" style="top:873px"><div class="t"><span class="n">call    </span><span class="b">mkd_compile</span></div></div><div class="l" style="top:905px"><div class="t"><span class="n">lea     </span><span class="n">rdx, [rbp+</span><span class="g">res</span><span class="n">]</span></div></div><div class="l" style="top:937px"><div class="t"><span class="n">mov     </span><span class="n">rax, [rbp+</span><span class="g">document</span><span class="n">]</span></div></div><div class="l" style="top:969px"><div class="t"><span class="n">mov     </span><span class="n">rsi, rdx</span><span class="n">        </span><span class="b">; res</span></div></div><div class="l" style="top:1001px"><div class="t"><span class="n">mov     </span><span class="n">rdi, rax</span><span class="n">        </span><span class="b">; p</span></div></div></div><div id="shadow"></div></div>
</body></html>
